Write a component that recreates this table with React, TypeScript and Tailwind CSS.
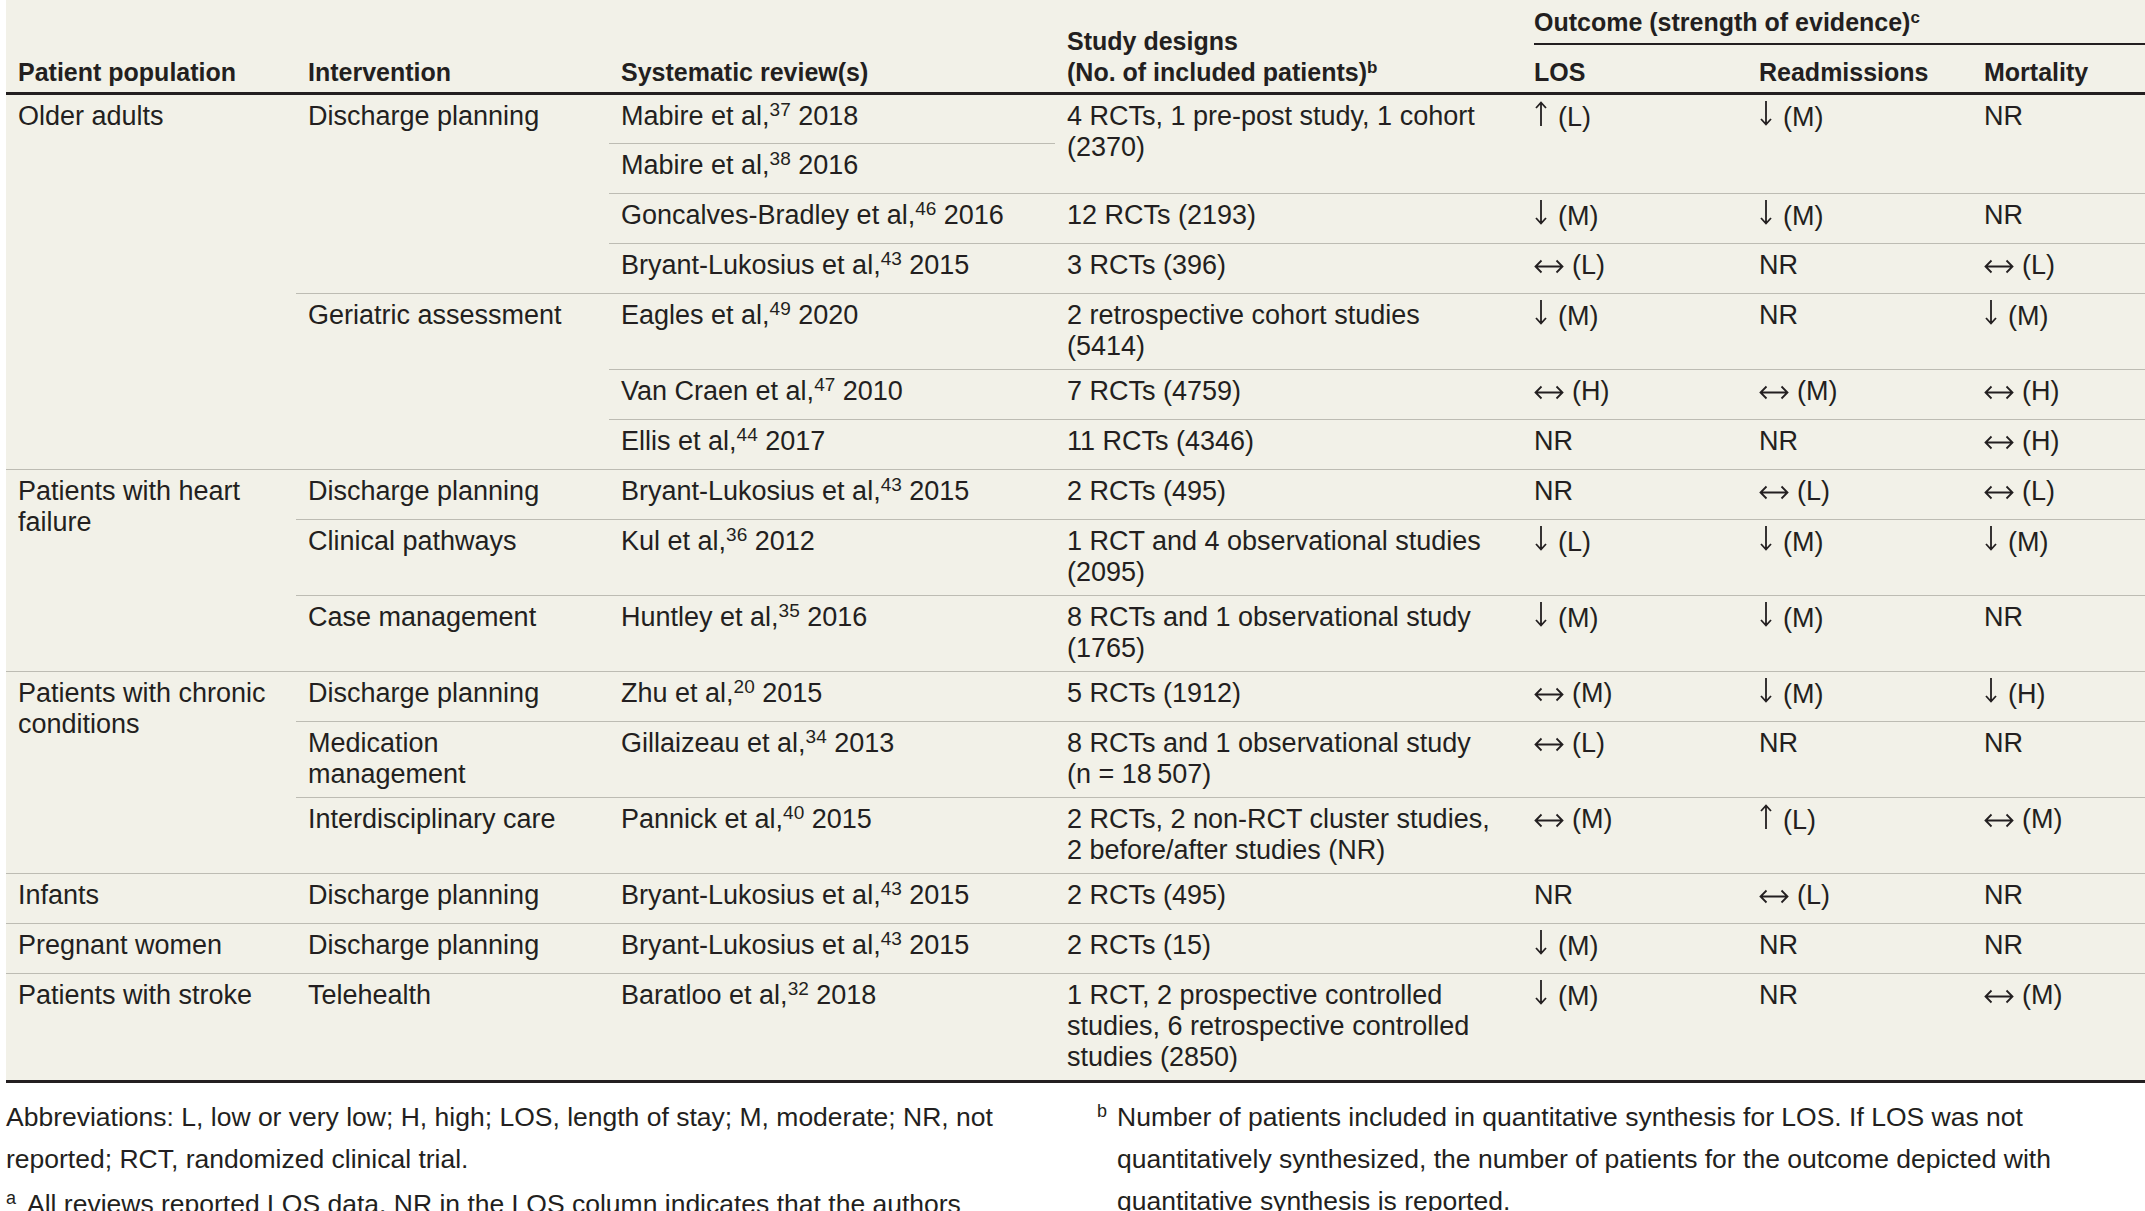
import type { ReactNode } from "react";

type Cell = { c: ReactNode; rs?: number };
type Dir = "up" | "down" | "both";

function Arrow({ dir }: { dir: Dir }) {
  if (dir === "both") {
    return (
      <svg
        width="30"
        height="17"
        viewBox="0 0 30 17"
        fill="none"
        stroke="currentColor"
        strokeWidth="1.8"
        className="mr-[8px] inline align-[-1px]"
      >
        <path d="M1.5 8.5H28.5M7.5 2.5L1.5 8.5L7.5 14.5M22.5 2.5L28.5 8.5L22.5 14.5" />
      </svg>
    );
  }
  return (
    <svg
      width="14"
      height="25"
      viewBox="0 0 14 25"
      fill="none"
      stroke="currentColor"
      strokeWidth="1.8"
      className="mr-[10px] inline align-baseline"
    >
      {dir === "up" ? <path d="M7 25V1.5M2 7L7 1.5L12 7" /> : <path d="M7 0V23.5M2 18L7 23.5L12 18" />}
    </svg>
  );
}

function Ev({ dir, level }: { dir: Dir; level: string }) {
  return (
    <>
      <Arrow dir={dir} />({level})
    </>
  );
}

function Ref({ name, n, year }: { name: string; n: number; year: number }) {
  return (
    <>
      {name} et al,<sup className="text-[19px]">{n}</sup> {year}
    </>
  );
}

const rows: Cell[][] = [
  [
    { c: "Older adults", rs: 7 },
    { c: "Discharge planning", rs: 4 },
    { c: <Ref name="Mabire" n={37} year={2018} /> },
    { c: <>4 RCTs, 1 pre-post study, 1 cohort<br />(2370)</>, rs: 2 },
    { c: <Ev dir="up" level="L" />, rs: 2 },
    { c: <Ev dir="down" level="M" />, rs: 2 },
    { c: "NR", rs: 2 },
  ],
  [{ c: <Ref name="Mabire" n={38} year={2016} /> }],
  [
    { c: <Ref name="Goncalves-Bradley" n={46} year={2016} /> },
    { c: "12 RCTs (2193)" },
    { c: <Ev dir="down" level="M" /> },
    { c: <Ev dir="down" level="M" /> },
    { c: "NR" },
  ],
  [
    { c: <Ref name="Bryant-Lukosius" n={43} year={2015} /> },
    { c: "3 RCTs (396)" },
    { c: <Ev dir="both" level="L" /> },
    { c: "NR" },
    { c: <Ev dir="both" level="L" /> },
  ],
  [
    { c: "Geriatric assessment", rs: 3 },
    { c: <Ref name="Eagles" n={49} year={2020} /> },
    { c: <>2 retrospective cohort studies<br />(5414)</> },
    { c: <Ev dir="down" level="M" /> },
    { c: "NR" },
    { c: <Ev dir="down" level="M" /> },
  ],
  [
    { c: <Ref name="Van Craen" n={47} year={2010} /> },
    { c: "7 RCTs (4759)" },
    { c: <Ev dir="both" level="H" /> },
    { c: <Ev dir="both" level="M" /> },
    { c: <Ev dir="both" level="H" /> },
  ],
  [
    { c: <Ref name="Ellis" n={44} year={2017} /> },
    { c: "11 RCTs (4346)" },
    { c: "NR" },
    { c: "NR" },
    { c: <Ev dir="both" level="H" /> },
  ],
  [
    { c: <>Patients with heart<br />failure</>, rs: 3 },
    { c: "Discharge planning" },
    { c: <Ref name="Bryant-Lukosius" n={43} year={2015} /> },
    { c: "2 RCTs (495)" },
    { c: "NR" },
    { c: <Ev dir="both" level="L" /> },
    { c: <Ev dir="both" level="L" /> },
  ],
  [
    { c: "Clinical pathways" },
    { c: <Ref name="Kul" n={36} year={2012} /> },
    { c: <>1 RCT and 4 observational studies<br />(2095)</> },
    { c: <Ev dir="down" level="L" /> },
    { c: <Ev dir="down" level="M" /> },
    { c: <Ev dir="down" level="M" /> },
  ],
  [
    { c: "Case management" },
    { c: <Ref name="Huntley" n={35} year={2016} /> },
    { c: <>8 RCTs and 1 observational study<br />(1765)</> },
    { c: <Ev dir="down" level="M" /> },
    { c: <Ev dir="down" level="M" /> },
    { c: "NR" },
  ],
  [
    { c: <>Patients with chronic<br />conditions</>, rs: 3 },
    { c: "Discharge planning" },
    { c: <Ref name="Zhu" n={20} year={2015} /> },
    { c: "5 RCTs (1912)" },
    { c: <Ev dir="both" level="M" /> },
    { c: <Ev dir="down" level="M" /> },
    { c: <Ev dir="down" level="H" /> },
  ],
  [
    { c: <>Medication<br />management</> },
    { c: <Ref name="Gillaizeau" n={34} year={2013} /> },
    { c: <>8 RCTs and 1 observational study<br />(n = 18{"\u2009"}507)</> },
    { c: <Ev dir="both" level="L" /> },
    { c: "NR" },
    { c: "NR" },
  ],
  [
    { c: "Interdisciplinary care" },
    { c: <Ref name="Pannick" n={40} year={2015} /> },
    { c: <>2 RCTs, 2 non-RCT cluster studies,<br />2 before/after studies (NR)</> },
    { c: <Ev dir="both" level="M" /> },
    { c: <Ev dir="up" level="L" /> },
    { c: <Ev dir="both" level="M" /> },
  ],
  [
    { c: "Infants" },
    { c: "Discharge planning" },
    { c: <Ref name="Bryant-Lukosius" n={43} year={2015} /> },
    { c: "2 RCTs (495)" },
    { c: "NR" },
    { c: <Ev dir="both" level="L" /> },
    { c: "NR" },
  ],
  [
    { c: "Pregnant women" },
    { c: "Discharge planning" },
    { c: <Ref name="Bryant-Lukosius" n={43} year={2015} /> },
    { c: "2 RCTs (15)" },
    { c: <Ev dir="down" level="M" /> },
    { c: "NR" },
    { c: "NR" },
  ],
  [
    { c: "Patients with stroke" },
    { c: "Telehealth" },
    { c: <Ref name="Baratloo" n={32} year={2018} /> },
    {
      c: (
        <>
          1 RCT, 2 prospective controlled<br />
          studies, 6 retrospective controlled<br />
          studies (2850)
        </>
      ),
    },
    { c: <Ev dir="down" level="M" /> },
    { c: "NR" },
    { c: <Ev dir="both" level="M" /> },
  ],
];

export default function App() {
  const lastRow = rows.length - 1;

  return (
    <div className="min-h-screen bg-white font-['Liberation_Sans',Arial,sans-serif] text-[#231f20]">
      <table className="ml-[6px] w-[2139px] table-fixed border-collapse bg-[#f2f1e8] text-[27px] leading-[31px]">
        <colgroup>
          <col className="w-[290px]" />
          <col className="w-[313px]" />
          <col className="w-[446px]" />
          <col className="w-[467px]" />
          <col className="w-[225px]" />
          <col className="w-[225px]" />
          <col className="w-[173px]" />
        </colgroup>
        <thead className="text-left text-[25px] font-bold">
          <tr>
            <th rowSpan={2} className="border-b-[3px] border-[#231f20] px-[12px] pb-[4px] align-bottom font-bold">
              Patient population
            </th>
            <th rowSpan={2} className="border-b-[3px] border-[#231f20] px-[12px] pb-[4px] align-bottom font-bold">
              Intervention
            </th>
            <th rowSpan={2} className="border-b-[3px] border-[#231f20] px-[12px] pb-[4px] align-bottom font-bold">
              Systematic review(s)
            </th>
            <th rowSpan={2} className="border-b-[3px] border-[#231f20] px-[12px] pb-[4px] align-bottom font-bold">
              Study designs
              <br />
              (No. of included patients)<sup className="text-[17px]">b</sup>
            </th>
            <th colSpan={3} className="p-0 pl-[12px] align-bottom font-bold">
              <div className="border-b-2 border-[#231f20] pb-[5px] pt-[7px]">
                Outcome (strength of evidence)<sup className="text-[17px]">c</sup>
              </div>
            </th>
          </tr>
          <tr>
            <th className="border-b-[3px] border-[#231f20] px-[12px] pb-[4px] pt-[12px] align-bottom font-bold">LOS</th>
            <th className="border-b-[3px] border-[#231f20] px-[12px] pb-[4px] pt-[12px] align-bottom font-bold">
              Readmissions
            </th>
            <th className="border-b-[3px] border-[#231f20] px-[12px] pb-[4px] pt-[12px] align-bottom font-bold">
              Mortality
            </th>
          </tr>
        </thead>
        <tbody>
          {rows.map((row, i) => (
            <tr key={i} className="h-[50px]">
              {row.map((cell, j) => {
                const endsLast = i + (cell.rs ?? 1) - 1 === lastRow;
                return (
                  <td
                    key={j}
                    rowSpan={cell.rs}
                    className={`px-[12px] pb-[7px] pt-[6px] align-top ${
                      i > 0 ? "border-t border-t-[#bdbcb3]" : ""
                    } ${endsLast ? "border-b-[3px] border-b-[#231f20]" : ""}`}
                  >
                    {cell.c}
                  </td>
                );
              })}
            </tr>
          ))}
        </tbody>
      </table>

      <div className="mt-[13px] flex text-[26.5px] leading-[42px]">
        <div className="w-[1097px] shrink-0 pl-[6px]">
          <p>
            Abbreviations: L, low or very low; H, high; LOS, length of stay; M, moderate; NR, not
            <br />
            reported; RCT, randomized clinical trial.
          </p>
          <div className="mt-[3px] flex">
            <span className="w-[21px] shrink-0">
              <sup className="text-[18px]">a</sup>
            </span>
            <p>All reviews reported LOS data. NR in the LOS column indicates that the authors</p>
          </div>
        </div>
        <div className="flex">
          <span className="w-[20px] shrink-0">
            <sup className="text-[18px]">b</sup>
          </span>
          <p>
            Number of patients included in quantitative synthesis for LOS. If LOS was not
            <br />
            quantitatively synthesized, the number of patients for the outcome depicted with
            <br />
            quantitative synthesis is reported.
          </p>
        </div>
      </div>
    </div>
  );
}
